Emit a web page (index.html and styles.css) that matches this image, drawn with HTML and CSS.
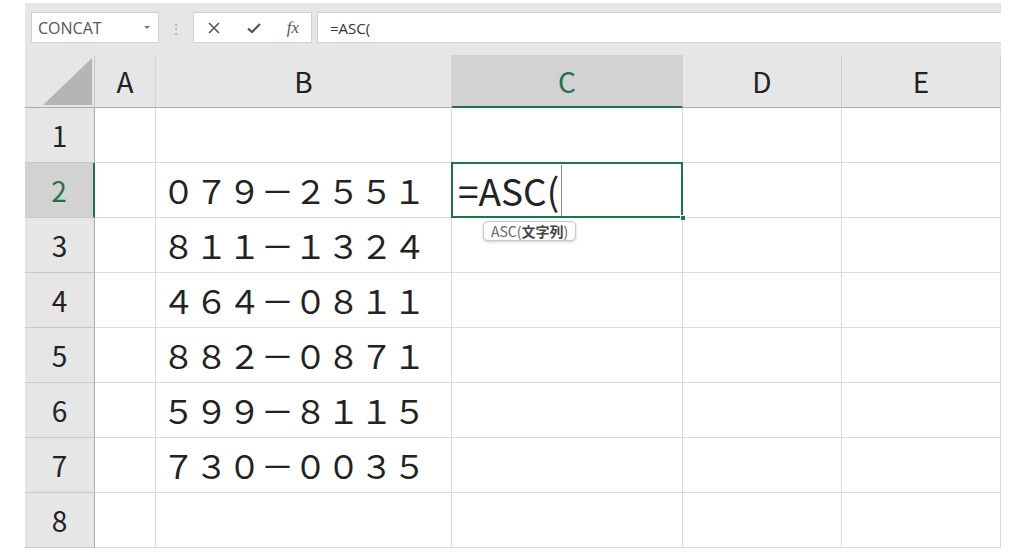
FILE: index.html
```html
<!DOCTYPE html>
<html lang="ja">
<head>
    <meta charset="UTF-8">
    <meta name="viewport" content="width=device-width, initial-scale=1.0">
    <title>ASC関数</title>
    <link rel="stylesheet" href="styles.css">
</head>
<body>

    <div class="sheet">
        <!-- formula bar -->
        <div class="formula-bar">
            <div class="name-box">
                <span>CONCAT</span>
                <span class="drop-arrow"></span>
            </div>
            <div class="grip">&#8942;</div>
            <div class="fx-buttons">
                <svg class="icon" width="14" height="14" viewBox="0 0 14 14">
                    <path d="M2 2 L12 12 M12 2 L2 12" stroke="#555" stroke-width="1.6" fill="none"/>
                </svg>
                <svg class="icon" width="16" height="14" viewBox="0 0 16 14">
                    <path d="M2 7.5 L6 11 L14 3" stroke="#555" stroke-width="2.2" fill="none"/>
                </svg>
                <span class="fx">fx</span>
            </div>
            <div class="formula-input">=ASC(</div>
        </div>

        <!-- cells -->
        <div class="grid">
            <div class="corner"><div class="triangle"></div></div>
            <div class="col-head">A</div>
            <div class="col-head">B</div>
            <div class="col-head selected">C</div>
            <div class="col-head">D</div>
            <div class="col-head">E</div>

            <div class="row-head">1</div>
            <div class="cell"></div>
            <div class="cell"></div>
            <div class="cell"></div>
            <div class="cell"></div>
            <div class="cell"></div>

            <div class="row-head selected">2</div>
            <div class="cell"></div>
            <div class="cell num">０７９－２５５１</div>
            <div class="cell active">
                <span class="edit-text">=ASC(</span>
                <span class="caret"></span>
                <div class="tip">ASC(<b>文字列</b>)</div>
                <div class="fill-handle"></div>
            </div>
            <div class="cell"></div>
            <div class="cell"></div>

            <div class="row-head">3</div>
            <div class="cell"></div>
            <div class="cell num">８１１－１３２４</div>
            <div class="cell"></div>
            <div class="cell"></div>
            <div class="cell"></div>

            <div class="row-head">4</div>
            <div class="cell"></div>
            <div class="cell num">４６４－０８１１</div>
            <div class="cell"></div>
            <div class="cell"></div>
            <div class="cell"></div>

            <div class="row-head">5</div>
            <div class="cell"></div>
            <div class="cell num">８８２－０８７１</div>
            <div class="cell"></div>
            <div class="cell"></div>
            <div class="cell"></div>

            <div class="row-head">6</div>
            <div class="cell"></div>
            <div class="cell num">５９９－８１１５</div>
            <div class="cell"></div>
            <div class="cell"></div>
            <div class="cell"></div>

            <div class="row-head">7</div>
            <div class="cell"></div>
            <div class="cell num">７３０－００３５</div>
            <div class="cell"></div>
            <div class="cell"></div>
            <div class="cell"></div>

            <div class="row-head">8</div>
            <div class="cell"></div>
            <div class="cell"></div>
            <div class="cell"></div>
            <div class="cell"></div>
            <div class="cell"></div>
        </div>
    </div>

</body>
</html>
```

FILE: styles.css
```css
* {
    box-sizing: border-box;
}
body {
    margin: 0;
    background-color: #fff;
    font-family: "Noto Sans CJK JP", "Noto Sans", sans-serif;
}
.sheet {
    width: 976px;
    margin: 3px 0 0 25px;
}
.formula-bar {
    display: flex;
    align-items: center;
    height: 52px;
    padding: 9px 0 12px 6px;
    background-color: #e6e6e6;
}
.name-box, .fx-buttons, .formula-input {
    height: 31px;
    background-color: #fff;
    border: 1px solid #d0d0d0;
    display: flex;
    align-items: center;
}
.name-box {
    width: 128px;
    padding: 0 6px;
    justify-content: space-between;
    font-family: "Open Sans", "Noto Sans", sans-serif;
    font-size: 16px;
    color: #555;
}
.drop-arrow {
    width: 0;
    height: 0;
    border-left: 3px solid transparent;
    border-right: 3px solid transparent;
    border-top: 3px solid #777;
    margin-right: 2px;
}
.grip {
    width: 34px;
    text-align: center;
    color: #aaa;
    font-size: 14px;
}
.fx-buttons {
    width: 119px;
    padding: 0 12px 0 13px;
    justify-content: space-between;
}
.fx {
    font-family: "Liberation Serif", serif;
    font-style: italic;
    font-size: 17px;
    color: #555;
}
.formula-input {
    flex: 1;
    margin-left: 5px;
    padding-left: 12px;
    border-right: none;
    font-family: "Open Sans", "Noto Sans", sans-serif;
    font-size: 15px;
    color: #333;
}
.grid {
    display: grid;
    grid-template-columns: 70px 61px 296px 231px 159px 159px;
    grid-template-rows: 53px repeat(8, 55px);
}
.corner, .col-head, .row-head {
    background-color: #e6e6e6;
    color: #222;
    font-size: 28px;
    display: flex;
    align-items: center;
    justify-content: center;
}
.corner {
    border-right: 1px solid #c8c8c8;
    border-bottom: 1px solid #ababab;
    position: relative;
}
.triangle {
    position: absolute;
    left: 18px;
    top: 3px;
    width: 49px;
    height: 47px;
    background-color: #b5b5b5;
    clip-path: polygon(100% 0, 100% 100%, 0 100%);
}
.col-head {
    border-right: 1px solid #d0d0d0;
    border-bottom: 1px solid #ababab;
}
.row-head {
    border-right: 1px solid #ababab;
    border-bottom: 1px solid #c8c8c8;
}
.col-head.selected {
    background-color: #d2d2d2;
    color: #217346;
    border-bottom: 2px solid #217346;
}
.row-head.selected {
    background-color: #d2d2d2;
    color: #217346;
    border-right: 2px solid #217346;
}
.cell {
    border-right: 1px solid #dadada;
    border-bottom: 1px solid #dadada;
    display: flex;
    align-items: center;
}
.num {
    padding-left: 6px;
    font-size: 33px;
    color: #222;
}
.active {
    position: relative;
    padding-left: 6px;
    align-items: stretch;
}
.active::before {
    content: "";
    position: absolute;
    left: -1px;
    top: -1px;
    right: -1px;
    bottom: -1px;
    border: 2px solid #217346;
}
.edit-text {
    align-self: center;
    font-size: 37px;
    color: #222;
}
.caret {
    width: 1px;
    margin: 2px 0 1px 2px;
    background-color: #888;
}
.tip {
    position: absolute;
    left: 31px;
    top: 58px;
    height: 20px;
    padding: 0 7px;
    background-color: #fff;
    border: 1px solid #c8c8c8;
    border-radius: 5px;
    box-shadow: 0 1px 3px rgba(0, 0, 0, 0.2);
    font-size: 14px;
    line-height: 18px;
    color: #666;
    z-index: 2;
}
.tip b {
    color: #444;
}
.fill-handle {
    position: absolute;
    right: -4px;
    bottom: -4px;
    width: 6px;
    height: 6px;
    background-color: #217346;
    border: 1px solid #fff;
    z-index: 2;
}
```
